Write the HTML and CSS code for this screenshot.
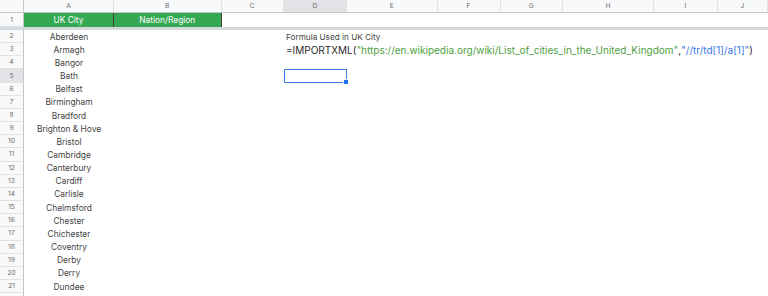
FILE: index.html
```html
<!DOCTYPE html>
<html lang="en">
<head>
<meta charset="utf-8">
<title>UK Cities</title>
<link rel="stylesheet" href="styles.css">
</head>
<body>
<div class="sheet">
  <div class="row colheads">
    <div class="corner"></div>
    <div class="ch">A</div>
    <div class="ch">B</div>
    <div class="ch">C</div>
    <div class="ch ch-sel">D</div>
    <div class="ch">E</div>
    <div class="ch">F</div>
    <div class="ch">G</div>
    <div class="ch">H</div>
    <div class="ch">I</div>
    <div class="ch">J</div>
  </div>
  <div class="row row1">
    <div class="rh">1</div>
    <div class="c hdr">UK City</div>
    <div class="c hdr">Nation/Region</div>
  </div>
  <div class="freeze"></div>
  <div class="body">
    <div class="row"><div class="rh">2</div><div class="c city">Aberdeen</div><div class="c"></div><div class="c"></div><div class="c note">Formula Used in UK City</div></div>
    <div class="row"><div class="rh">3</div><div class="c city">Armagh</div><div class="c"></div><div class="c"></div><div class="c formula">=IMPORTXML(<span class="str">"https://en.wikipedia.org/wiki/List_of_cities_in_the_United_Kingdom"</span>,<span class="xp">"//tr/td[1]/a[1]"</span>)</div></div>
    <div class="row"><div class="rh">4</div><div class="c city">Bangor</div></div>
    <div class="row"><div class="rh rh-sel">5</div><div class="c city">Bath</div><div class="c"></div><div class="c"></div><div class="c sel"><span class="handle"></span></div></div>
    <div class="row"><div class="rh">6</div><div class="c city">Belfast</div></div>
    <div class="row"><div class="rh">7</div><div class="c city">Birmingham</div></div>
    <div class="row"><div class="rh">8</div><div class="c city">Bradford</div></div>
    <div class="row"><div class="rh">9</div><div class="c city">Brighton &amp; Hove</div></div>
    <div class="row"><div class="rh">10</div><div class="c city">Bristol</div></div>
    <div class="row"><div class="rh">11</div><div class="c city">Cambridge</div></div>
    <div class="row"><div class="rh">12</div><div class="c city">Canterbury</div></div>
    <div class="row"><div class="rh">13</div><div class="c city">Cardiff</div></div>
    <div class="row"><div class="rh">14</div><div class="c city">Carlisle</div></div>
    <div class="row"><div class="rh">15</div><div class="c city">Chelmsford</div></div>
    <div class="row"><div class="rh">16</div><div class="c city">Chester</div></div>
    <div class="row"><div class="rh">17</div><div class="c city">Chichester</div></div>
    <div class="row"><div class="rh">18</div><div class="c city">Coventry</div></div>
    <div class="row"><div class="rh">19</div><div class="c city">Derby</div></div>
    <div class="row"><div class="rh">20</div><div class="c city">Derry</div></div>
    <div class="row"><div class="rh">21</div><div class="c city">Dundee</div></div>
    <div class="row"><div class="rh"></div><div class="c"></div></div>
  </div>
</div>
</body>
</html>
```
FILE: styles.css
```css
html, body {
  margin: 0;
  padding: 0;
  background: #ffffff;
  overflow: hidden;
}
.sheet {
  width: 768px;
  height: 296px;
  overflow: hidden;
  font-family: Inter, "Noto Sans", sans-serif;
  color: #3c3c3c;
}
.row {
  display: grid;
  grid-template-columns: 24px 90px 107.5px 62.5px 63px 90.5px 63px 62.5px 91px 64px 1fr;
  height: 13.16px;
}
.colheads {
  height: 13px;
  background: #f8f9fa;
  border-bottom: 1px solid #c4c7c5;
  box-sizing: border-box;
}
.corner {
  background: #f8f9fa;
  border-right: 1px solid #c4c7c5;
}
.ch {
  border-right: 1px solid #e1e3e1;
  font-size: 6.6px;
  color: #6b6b6b;
  display: flex;
  align-items: center;
  justify-content: center;
}
.ch-sel {
  background: #e1e3e6;
}
.row1 {
  height: 14px;
}
.rh {
  background: #f8f9fa;
  border-right: 1px solid #c4c7c5;
  border-bottom: 1px solid #e1e3e1;
  box-sizing: border-box;
  font-size: 6.6px;
  color: #6b6b6b;
  display: flex;
  align-items: center;
  justify-content: center;
}
.rh-sel {
  background: #e1e3e6;
}
.c {
  display: flex;
  align-items: center;
  white-space: nowrap;
  min-width: 0;
  box-sizing: border-box;
}
.hdr {
  background: #34a853;
  color: #ffffff;
  font-size: 8.4px;
  justify-content: center;
  border-right: 1px solid #4a3e33;
}
.freeze {
  height: 3px;
  background: #d6d9de;
}
.body {
  display: flex;
  flex-direction: column;
}
.city {
  justify-content: center;
  font-size: 8.4px;
  color: #444444;
}
.note {
  font-size: 8.2px;
  color: #444444;
  padding-left: 2px;
  overflow: visible;
}
.formula {
  font-size: 10px;
  color: #2a2a2a;
  padding-left: 2px;
  overflow: visible;
}
.str { color: #4f9f44; }
.xp { color: #3b78e7; }
.sel {
  position: relative;
  border: 1.5px solid #3b7ee8;
}
.handle {
  position: absolute;
  right: -3px;
  bottom: -3px;
  width: 4px;
  height: 4px;
  background: #1a73e8;
  border: 0.5px solid #fff;
}
```
